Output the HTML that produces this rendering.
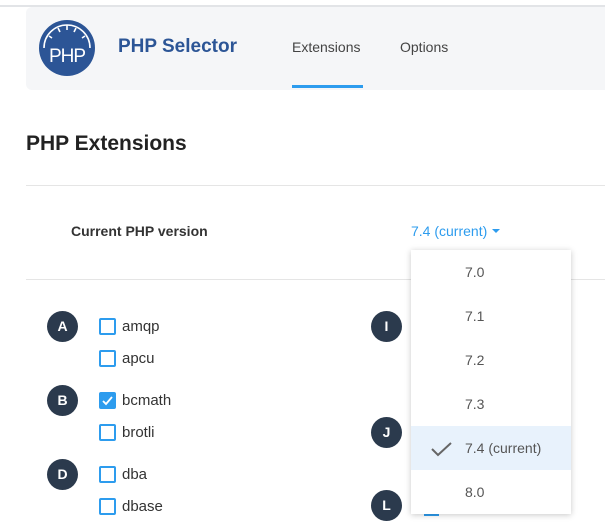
<!DOCTYPE html>
<html><head><style>
*{margin:0;padding:0;box-sizing:border-box}
body{width:605px;height:527px;overflow:hidden;background:#fff;font-family:"Liberation Sans",sans-serif;position:relative;color:#333}
.a{position:absolute}
.c{position:absolute;width:31px;height:31px;border-radius:50%;background:#2b3a4d;color:#fff;font-size:14px;text-align:center;line-height:31px;font-weight:bold}
.cb{position:absolute;left:99px;width:17px;height:17px;border:2px solid #2d9cee;border-radius:2px;background:#fff}
.l{position:absolute;left:122px;font-size:15px;color:#333;line-height:17px}
.it{position:absolute;left:0;width:160px;height:44px;line-height:44px;padding-left:54px;font-size:14px;color:#555}
</style></head><body>
<div class="a" style="left:0;top:5px;width:605px;height:2px;background:#e2e4e7"></div>
<div class="a" style="left:26px;top:7px;width:579px;height:83px;background:#f5f6f8;border-radius:6px 0 0 6px"></div>
<svg class="a" style="left:39px;top:20px" width="56" height="56" viewBox="0 0 56 56">
<circle cx="28" cy="28" r="28" fill="#2c5596"/>
<path d="M5 28 A23 23 0 0 1 51 28" fill="none" stroke="#fff" stroke-width="1.6"/>
<g stroke="#fff" stroke-width="1.6"><line x1="10" y1="16" x2="13" y2="18"/><line x1="19" y1="8" x2="21" y2="12"/><line x1="28" y1="5" x2="28" y2="10"/><line x1="37" y1="8" x2="35" y2="12"/><line x1="46" y1="16" x2="43" y2="18"/></g>
<text x="28" y="42" text-anchor="middle" fill="#fff" font-family="Liberation Sans" font-size="19" letter-spacing="-1">PHP</text>
</svg>
<div class="a" style="left:118px;top:36px;font-size:19px;font-weight:bold;color:#2c5596">PHP Selector</div>
<div class="a" style="left:292px;top:39px;font-size:14px;color:#444">Extensions</div>
<div class="a" style="left:400px;top:39px;font-size:14px;color:#444">Options</div>
<div class="a" style="left:292px;top:85px;width:71px;height:3px;background:#2d9cee"></div>
<div class="a" style="left:26px;top:132px;font-size:21px;font-weight:bold;color:#222">PHP Extensions</div>
<div class="a" style="left:26px;top:185px;width:579px;height:1px;background:#e5e5e5"></div>
<div class="a" style="left:71px;top:223px;font-size:14px;font-weight:bold;color:#333">Current PHP version</div>
<div class="a" style="left:411px;top:223px;font-size:14px;color:#2d9cee">7.4 (current)</div>
<svg class="a" style="left:492px;top:229px" width="8" height="5"><path d="M0 0 L8 0 L4 4Z" fill="#2d9cee"/></svg>
<div class="a" style="left:26px;top:279px;width:579px;height:1px;background:#e5e5e5"></div>
<div class="c" style="left:47px;top:311px">A</div>
<div class="c" style="left:47px;top:385px">B</div>
<div class="c" style="left:47px;top:459px">D</div>
<div class="c" style="left:371px;top:311px">I</div>
<div class="c" style="left:371px;top:417px">J</div>
<div class="c" style="left:371px;top:490px">L</div>
<div class="cb" style="top:318px"></div><div class="l" style="top:318px">amqp</div>
<div class="cb" style="top:350px"></div><div class="l" style="top:350px">apcu</div>
<div class="cb" style="top:392px;background:#2d9cee"><svg width="13" height="13" style="position:absolute;left:0;top:0"><path d="M2 7 L5 10 L11 3" stroke="#fff" stroke-width="1.8" fill="none"/></svg></div><div class="l" style="top:392px">bcmath</div>
<div class="cb" style="top:424px"></div><div class="l" style="top:424px">brotli</div>
<div class="cb" style="top:466px"></div><div class="l" style="top:466px">dba</div>
<div class="cb" style="top:498px"></div><div class="l" style="top:498px">dbase</div>
<div class="a" style="left:424px;top:512px;width:15px;height:4px;background:#2d9cee"></div>
<div class="a" style="left:411px;top:250px;width:160px;height:264px;background:#fff;box-shadow:0 1px 6px rgba(0,0,0,.22)">
<div class="it" style="top:0">7.0</div>
<div class="it" style="top:44px">7.1</div>
<div class="it" style="top:88px">7.2</div>
<div class="it" style="top:132px">7.3</div>
<div class="it" style="top:176px;background:#e8f2fc">7.4 (current)</div>
<svg class="a" style="left:20px;top:190px" width="22" height="18"><path d="M1 9 L7 15 L20 3" stroke="#666" stroke-width="2" fill="none"/></svg>
<div class="it" style="top:220px">8.0</div>
</div>
</body></html>
